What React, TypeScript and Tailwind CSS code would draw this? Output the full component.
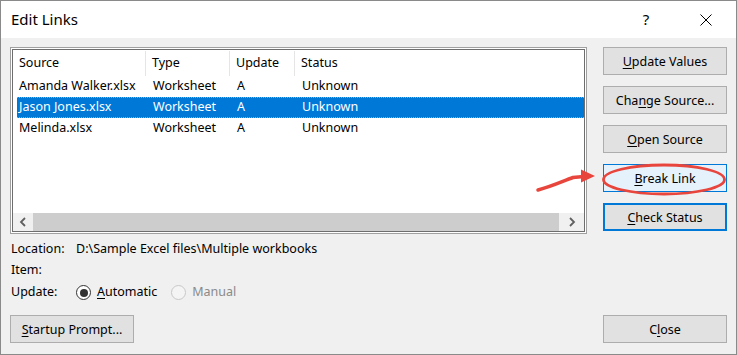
import React from "react";

const F = { fontFamily: '"Noto Sans", "Open Sans", sans-serif' };

function U({ children }: { children: React.ReactNode }) {
  return <span className="underline underline-offset-2 decoration-1">{children}</span>;
}

function Btn({
  children,
  variant = "normal",
  className = "",
}: {
  children: React.ReactNode;
  variant?: "normal" | "hover" | "default";
  className?: string;
}) {
  const v =
    variant === "hover"
      ? "bg-[#e5f1fb] border border-[#0078d7]"
      : variant === "default"
      ? "bg-[#e1e1e1] border-2 border-[#0078d7]"
      : "bg-[#e1e1e1] border border-[#adadad]";
  return (
    <div
      className={`w-[124px] h-[28px] pt-[2px] flex items-center justify-center text-[12.5px] text-black ${v} ${className}`}
    >
      {children}
    </div>
  );
}

function Chevron({ dir }: { dir: "left" | "right" }) {
  return (
    <svg width="8" height="10" viewBox="0 0 8 10">
      {dir === "left" ? (
        <polyline points="6,1 2,5 6,9" fill="none" stroke="#606060" strokeWidth="1.8" />
      ) : (
        <polyline points="2,1 6,5 2,9" fill="none" stroke="#606060" strokeWidth="1.8" />
      )}
    </svg>
  );
}

const rows = [
  { s: "Amanda Walker.xlsx", sel: false },
  { s: "Jason Jones.xlsx", sel: true },
  { s: "Melinda.xlsx", sel: false },
];

export default function App() {
  return (
    <div
      style={F}
      className="relative w-[737px] h-[355px] border border-[#8a8a8a] bg-[#f0f0f0] flex flex-col text-black overflow-hidden"
    >
      {/* Title bar */}
      <div className="h-[37px] bg-white flex items-center pl-[10px] shrink-0">
        <div className="text-[15px] leading-none">Edit Links</div>
        <div className="ml-auto flex items-center">
          <div className="text-[15px] leading-none w-[12px] text-center mr-[48px]">?</div>
          <svg width="12" height="12" viewBox="0 0 12 12" className="mr-[24px]">
            <line x1="0.5" y1="0.5" x2="11.5" y2="11.5" stroke="#000" strokeWidth="1" />
            <line x1="11.5" y1="0.5" x2="0.5" y2="11.5" stroke="#000" strokeWidth="1" />
          </svg>
        </div>
      </div>

      {/* Body */}
      <div className="flex-1 flex flex-col pl-[9px] pr-[9px] pt-[9px] pb-[11px]">
        <div className="flex items-start">
          <div className="flex flex-col">
            {/* List box */}
            <div className="w-[577px] h-[187px] border border-[#a0a0a0] bg-white p-px">
              <div className="w-full h-full border border-[#6e6e6e] flex flex-col text-[12.5px]">
                {/* header */}
                <div className="h-[26px] pt-[1px] flex items-stretch pl-[4px] shrink-0">
                  <div className="w-[129px] pl-[2px] border-r border-[#e5e5e5] flex items-center">Source</div>
                  <div className="w-[84px] pl-[6px] border-r border-[#e5e5e5] flex items-center">Type</div>
                  <div className="w-[65px] pl-[6px] border-r border-[#e5e5e5] flex items-center">Update</div>
                  <div className="pl-[6px] flex items-center">Status</div>
                </div>
                {rows.map((r) => (
                  <div
                    key={r.s}
                    className={`h-[21px] ml-[4px] flex items-center ${
                      r.sel
                        ? "bg-[#0078d7] text-white border-y border-dotted border-[#d9a066]"
                        : ""
                    }`}
                  >
                    <div className="w-[129px] pl-[2px]">{r.s}</div>
                    <div className="w-[84px] pl-[7px]">Worksheet</div>
                    <div className="w-[65px] pl-[7px]">A</div>
                    <div className="pl-[7px]">Unknown</div>
                  </div>
                ))}
                <div className="flex-1" />
                {/* scrollbar */}
                <div className="h-[18px] flex shrink-0">
                  <div className="w-[20px] bg-[#f0f0f0] flex items-center justify-center">
                    <Chevron dir="left" />
                  </div>
                  <div className="flex-1 bg-[#cdcdcd]" />
                  <div className="w-[25px] bg-[#f0f0f0] flex items-center justify-center">
                    <Chevron dir="right" />
                  </div>
                </div>
              </div>
            </div>

            {/* Info */}
            <div className="mt-[5px] text-[12.5px]">
              <div className="h-[21px] flex items-center">
                <div className="w-[66px] pl-[1px]">Location:</div>
                <div>D:\Sample Excel files\Multiple workbooks</div>
              </div>
              <div className="h-[21px] flex items-center">
                <div className="w-[66px] pl-[1px]">Item:</div>
              </div>
              <div className="h-[22px] pt-[1px] flex items-center">
                <div className="w-[66px] pl-[1px]">Update:</div>
                <div className="flex items-center">
                  <div className="w-[15px] h-[15px] rounded-full border border-[#333] bg-white flex items-center justify-center">
                    <div className="w-[8px] h-[8px] rounded-full bg-[#333]" />
                  </div>
                  <div className="ml-[6px]">
                    <U>A</U>utomatic
                  </div>
                  <div className="ml-[14px] w-[15px] h-[15px] rounded-full border border-[#c8c8c8] bg-[#f4f4f4]" />
                  <div className="ml-[6px] text-[#8a8a8a]">Manual</div>
                </div>
              </div>
            </div>
          </div>

          {/* Buttons column */}
          <div className="ml-[16px] flex flex-col gap-[11px]">
            <Btn>
              <U>U</U>pdate Values
            </Btn>
            <Btn>
              Cha<U>n</U>ge Source...
            </Btn>
            <Btn>
              <U>O</U>pen Source
            </Btn>
            <Btn variant="hover">
              <U>B</U>reak Link
            </Btn>
            <Btn variant="default">
              <U>C</U>heck Status
            </Btn>
          </div>
        </div>

        <div className="mt-auto flex justify-between">
          <Btn>
            <U>S</U>tartup Prompt...
          </Btn>
          <Btn>
            C<U>l</U>ose
          </Btn>
        </div>
      </div>

      {/* Red annotation overlay */}
      <svg
        className="absolute left-0 top-0 pointer-events-none"
        width="737"
        height="355"
        viewBox="0 0 737 355"
      >
        <ellipse cx="663" cy="178.5" rx="60.5" ry="14.5" fill="none" stroke="#e8453c" strokeWidth="2.8" />
        <path
          d="M537 189 C 552 185, 562 180, 572 176.5 L 583 175.5"
          fill="none"
          stroke="#e8453c"
          strokeWidth="3.5"
          strokeLinecap="round"
        />
        <polygon points="580,168.5 594,175 580,181.5" fill="#e8453c" />
      </svg>
    </div>
  );
}
